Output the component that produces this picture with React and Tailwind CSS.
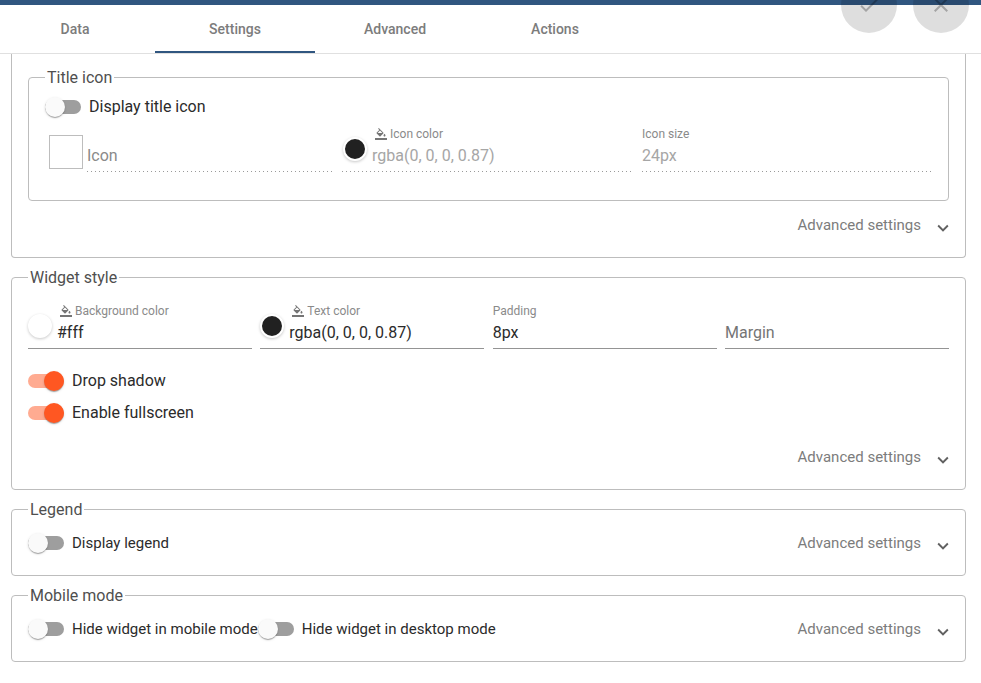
import React from "react";

function Sw({ on }) {
  return (
    <span className="relative inline-block w-9 h-[14px] shrink-0">
      <span className={"absolute inset-0 rounded-full " + (on ? "bg-[#ffab91]" : "bg-[#9e9e9e]")} />
      <span
        className={
          "absolute top-[-3px] w-5 h-5 rounded-full shadow-[0_2px_1px_-1px_rgba(0,0,0,0.2),0_1px_1px_0_rgba(0,0,0,0.14),0_1px_3px_0_rgba(0,0,0,0.12)] " +
          (on ? "right-0 bg-[#ff5722]" : "left-0 bg-[#fafafa]")
        }
      />
    </span>
  );
}

function Toggle({ on, label, cls = "text-[16px]" }) {
  return (
    <div className="flex items-center gap-2 h-6">
      <Sw on={on} />
      <span className={"text-[#2b2b2b] whitespace-nowrap " + cls}>{label}</span>
    </div>
  );
}

function Fill() {
  return (
    <svg viewBox="0 0 24 24" className="w-3 h-3 fill-[#757575] shrink-0">
      <path d="M16.56 8.94 7.62 0 6.21 1.41l2.38 2.38-5.15 5.15c-.59.59-.59 1.54 0 2.12l5.5 5.5c.29.29.68.44 1.06.44s.77-.15 1.06-.44l5.5-5.5c.59-.58.59-1.53 0-2.12zM5.21 10 10 5.21 14.79 10H5.21zM19 11.5s-2 2.17-2 3.5c0 1.1.9 2 2 2s2-.9 2-2c0-1.33-2-3.5-2-3.5z" />
      <path d="M0 20h24v4H0z" />
    </svg>
  );
}

function Adv() {
  return (
    <div className="flex items-center mr-[-5px]">
      <span className="text-[15px] text-[#7c7c7c] whitespace-nowrap">Advanced settings</span>
      <svg viewBox="0 0 24 24" className="w-[22px] h-[22px] ml-[11px] mt-[6px] fill-[#616161]">
        <path d="M16.59 8.59 12 13.17 7.41 8.59 6 10l6 6 6-6z" />
      </svg>
    </div>
  );
}

function Dot({ white }) {
  return (
    <span
      className={
        "block w-6 h-6 rounded-full border-2 border-white shadow-[0_1px_3px_rgba(0,0,0,0.22)] shrink-0 " +
        (white ? "bg-white" : "bg-[#212121]")
      }
    />
  );
}

const dotted =
  "bg-[linear-gradient(to_right,#9a9a9a_25%,transparent_25%)] bg-[length:4px_1px] bg-[position:left_bottom] bg-repeat-x";

function ColorField({ label, value, disabled }) {
  return (
    <div
      className={
        "relative h-[46px] flex flex-col " +
        (disabled ? "pl-[30px] " + dotted : "pl-[29px] border-b border-[#949494]")
      }
    >
      <span className={"absolute top-[11px] " + (disabled ? "left-[1px]" : "left-0")}>
        <Dot white={value === "#fff"} />
      </span>
      <div className="flex items-center h-[15px] text-[12px] text-[#8a8a8a] pl-[3px]">
        <Fill />
        <span className="ml-[3px] whitespace-nowrap">{label}</span>
      </div>
      <span className={"text-[16px] leading-[20px] mt-[5px] " + (disabled ? "text-[#a6a6a6]" : "text-[#2b2b2b]")}>
        {value}
      </span>
    </div>
  );
}

function TextField({ label, value, placeholder, disabled }) {
  return (
    <div className={"h-[46px] flex flex-col " + (disabled ? dotted : "border-b border-[#949494]")}>
      <span className="h-[17px] text-[12px] leading-[17px] text-[#8a8a8a]">{label || "\u00a0"}</span>
      <span
        className={
          "text-[16px] leading-[20px] mt-[3px] " +
          (value ? (disabled ? "text-[#a6a6a6]" : "text-[#2b2b2b]") : "text-[#757575]")
        }
      >
        {value || placeholder}
      </span>
    </div>
  );
}

function Legend({ children }) {
  return (
    <legend className="px-[2px] text-[16px] leading-[20px] text-[#4f4f4f]">
      <span className="relative top-[1px]">{children}</span>
    </legend>
  );
}

function Panel({ title, className, children }) {
  return (
    <fieldset className={"border border-[#bdbdbd] rounded-[4px] px-4 " + className}>
      <Legend>{title}</Legend>
      {children}
    </fieldset>
  );
}

export default function App() {
  return (
    <div className="relative w-[981px] h-[683px] overflow-hidden bg-white font-['Roboto',sans-serif]">
      <div className="h-[5px] bg-[#305680]" />
      <div className="h-[49px] border-b border-[#e0e0e0] flex ml-[-5px]">
        {["Data", "Settings", "Advanced", "Actions"].map((t) => (
          <div
            key={t}
            className={
              "w-40 h-[48px] flex items-center justify-center text-[14px] font-medium text-[#7c7c7c] " +
              (t === "Settings" ? "pt-[2px] border-b-2 border-[#305680]" : "")
            }
          >
            {t}
          </div>
        ))}
      </div>

      <button className="absolute left-[841px] top-[-23px] w-14 h-14 rounded-full bg-[rgba(0,0,0,0.13)] flex items-center justify-center">
        <svg viewBox="0 0 24 24" className="w-6 h-6 fill-[rgba(0,0,0,0.26)]">
          <path d="M9 16.17 4.83 12l-1.42 1.41L9 19 21 7l-1.41-1.41z" />
        </svg>
      </button>
      <button className="absolute left-[913px] top-[-23px] w-14 h-14 rounded-full bg-[rgba(0,0,0,0.13)] flex items-center justify-center">
        <svg viewBox="0 0 24 24" className="w-6 h-6 fill-[rgba(0,0,0,0.26)]">
          <path d="M19 6.41 17.59 5 12 10.59 6.41 5 5 6.41 10.59 12 5 17.59 6.41 19 12 13.41 17.59 19 19 17.59 13.41 12z" />
        </svg>
      </button>

      <div className="flex flex-col pl-[11px] pr-[15px] gap-[9px]">
        <div className="h-[204px] border-x border-b border-[#bdbdbd] rounded-b-[4px] px-4 flex flex-col">
          <fieldset className="mt-[13px] h-[134px] border border-[#bdbdbd] rounded-[4px] px-4">
            <Legend>Title icon</Legend>
            <div className="mt-[8px]">
              <Toggle label="Display title icon" />
            </div>
            <div className="grid grid-cols-[287px_290px_289px] gap-[10px] mt-[7px]">
              <div className="flex pl-[4px]">
                <span className="w-[34px] h-[34px] border border-[#bdbdbd] mt-[9px] shrink-0" />
                <div className={"flex-1 ml-[4px] h-[46px] pt-[20px] text-[16px] leading-[20px] text-[#8a8a8a] " + dotted}>
                  Icon
                </div>
              </div>
              <ColorField label="Icon color" value="rgba(0, 0, 0, 0.87)" disabled />
              <TextField label="Icon size" value="24px" disabled />
            </div>
          </fieldset>
          <div className="flex justify-end mt-[10px]">
            <Adv />
          </div>
        </div>

        <Panel title="Widget style" className="h-[223px]">
          <div className="grid grid-cols-[repeat(4,224px)] justify-between mt-[16px]">
            <ColorField label="Background color" value="#fff" />
            <ColorField label="Text color" value="rgba(0, 0, 0, 0.87)" />
            <TextField label="Padding" value="8px" />
            <TextField placeholder="Margin" value="" />
          </div>
          <div className="flex flex-col gap-2 mt-[20px]">
            <Toggle on label="Drop shadow" />
            <Toggle on label="Enable fullscreen" />
          </div>
          <div className="flex justify-end mt-[18px]">
            <Adv />
          </div>
        </Panel>

        <Panel title="Legend" className="h-[77px]">
          <div className="flex items-center justify-between mt-[10px]">
            <Toggle label="Display legend" cls="text-[15px]" />
            <Adv />
          </div>
        </Panel>

        <Panel title="Mobile mode" className="h-[77px]">
          <div className="flex items-center justify-between mt-[10px]">
            <div className="flex">
              <Toggle label="Hide widget in mobile mode" cls="text-[15px]" />
              <Toggle label="Hide widget in desktop mode" cls="text-[15px]" />
            </div>
            <Adv />
          </div>
        </Panel>
      </div>
    </div>
  );
}
